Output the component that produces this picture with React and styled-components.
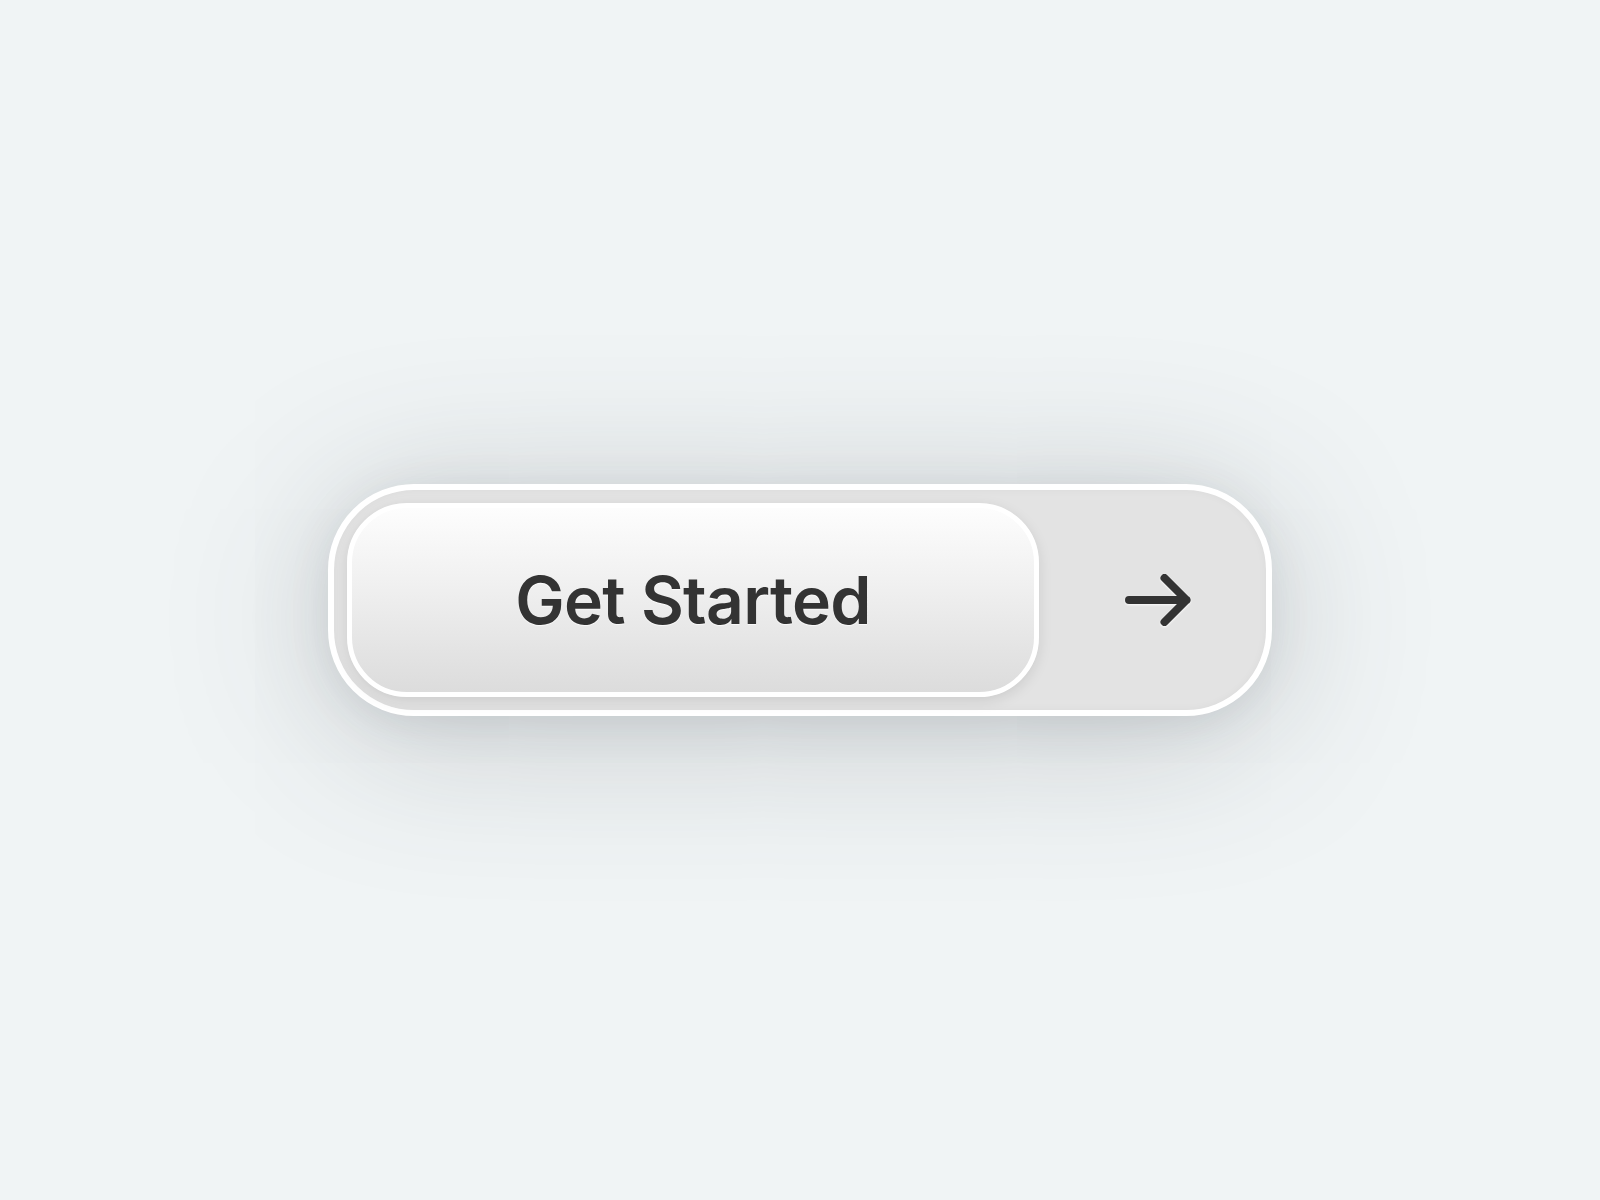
import React from "react";
import styled, { createGlobalStyle } from "styled-components";

const GlobalStyle = createGlobalStyle`
  html, body {
    margin: 0;
    padding: 0;
    background: #f0f4f5;
  }
  body {
    font-family: Inter, "Noto Sans", sans-serif;
  }
`;

const Page = styled.div`
  width: 100vw;
  height: 1200px;
  display: flex;
  align-items: center;
  justify-content: center;
  background: #f0f4f5;
`;

const Pill = styled.div`
  box-sizing: border-box;
  width: 944px;
  height: 232px;
  padding: 13px;
  display: flex;
  align-items: stretch;
  border: 6px solid #ffffff;
  border-radius: 86px;
  background: #e3e3e3;
  box-shadow: 0 18px 160px rgba(60, 65, 75, 0.26),
    0 6px 40px rgba(60, 65, 75, 0.1),
    inset 0 0 8px rgba(0, 0, 0, 0.04);
`;

const MainButton = styled.button`
  box-sizing: border-box;
  width: 692px;
  flex: none;
  border: 5px solid #ffffff;
  border-radius: 60px;
  background: linear-gradient(180deg, #fdfdfd 0%, #efefef 45%, #dcdcdc 100%);
  box-shadow: 0 4px 14px rgba(0, 0, 0, 0.1);
  display: flex;
  align-items: center;
  justify-content: center;
  font-family: Inter, "Noto Sans", sans-serif;
  font-size: 66px;
  font-weight: 600;
  letter-spacing: -0.7px;
  color: #333333;
  text-shadow: 0 1px 1px rgba(255, 255, 255, 0.8);
  cursor: pointer;
  padding: 0;
`;

const ArrowSlot = styled.div`
  flex: 1;
  display: flex;
  align-items: center;
  justify-content: center;
  padding-left: 28px;
`;

const ArrowIcon = styled.svg`
  width: 72px;
  height: 60px;
  filter: drop-shadow(0 1px 1px rgba(255, 255, 255, 0.9));
`;

export default function App() {
  return (
    <>
      <GlobalStyle />
      <Page>
        <Pill>
          <MainButton>Get Started</MainButton>
          <ArrowSlot>
            <ArrowIcon viewBox="0 0 72 60" fill="none">
              <path
                d="M5 30H62.5M40.5 8L62.5 30L40.5 52"
                stroke="#333333"
                strokeWidth="8"
                strokeLinecap="round"
                strokeLinejoin="round"
              />
            </ArrowIcon>
          </ArrowSlot>
        </Pill>
      </Page>
    </>
  );
}
